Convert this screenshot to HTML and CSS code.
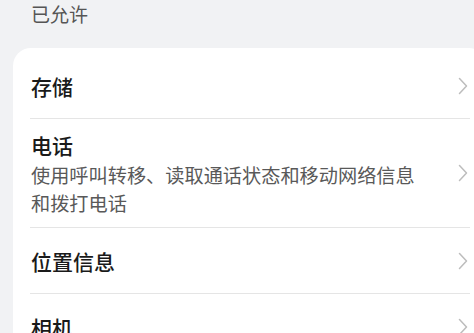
FILE: index.html
```html
<!DOCTYPE html>
<html lang="zh-CN">
<head>
<meta charset="utf-8">
<link rel="stylesheet" href="styles.css">
</head>
<body>
<div class="header">已允许</div>
<div class="card">
  <div class="row">
    <div class="text"><div class="title">存储</div></div>
    <svg class="chev" width="10" height="18" viewBox="0 0 10 18"><polyline points="1.5,1.5 8.5,9 1.5,16.5"/></svg>
  </div>
  <div class="row">
    <div class="text">
      <div class="title">电话</div>
      <div class="sub">使用呼叫转移、读取通话状态和移动网络信息和拨打电话</div>
    </div>
    <svg class="chev" width="10" height="18" viewBox="0 0 10 18"><polyline points="1.5,1.5 8.5,9 1.5,16.5"/></svg>
  </div>
  <div class="row">
    <div class="text"><div class="title">位置信息</div></div>
    <svg class="chev" width="10" height="18" viewBox="0 0 10 18"><polyline points="1.5,1.5 8.5,9 1.5,16.5"/></svg>
  </div>
  <div class="row">
    <div class="text"><div class="title">相机</div></div>
    <svg class="chev" width="10" height="18" viewBox="0 0 10 18"><polyline points="1.5,1.5 8.5,9 1.5,16.5"/></svg>
  </div>
</div>
</body>
</html>
```
FILE: styles.css
```css
html, body {
  margin: 0;
  padding: 0;
}
body {
  background: #f1f2f4;
  overflow: hidden;
  font-family: "Noto Sans CJK SC", "Noto Sans", sans-serif;
  width: 474px;
  height: 333px;
}
.header {
  padding-left: 31px;
  font-size: 19px;
  line-height: 28px;
  color: #555555;
  margin-bottom: 20px;
}
.card {
  margin-left: 13px;
  width: 474px;
  box-sizing: border-box;
  background: #ffffff;
  border-radius: 18px;
  padding: 5px 17px 0;
}
.row {
  display: flex;
  align-items: center;
  justify-content: space-between;
  box-sizing: border-box;
  min-height: 66px;
  padding: 10px 2px 10px 1px;
  border-bottom: 1px solid #e5e5e5;
}
.text {
  max-width: 396px;
}
.title {
  font-size: 21px;
  line-height: 32px;
  font-weight: 500;
  color: #1a1a1a;
}
.sub {
  font-size: 19.2px;
  line-height: 28px;
  color: #595959;
}
.chev {
  flex: none;
  fill: none;
  stroke: #bdbdbd;
  stroke-width: 1.5;
  stroke-linecap: round;
  stroke-linejoin: round;
}
```
